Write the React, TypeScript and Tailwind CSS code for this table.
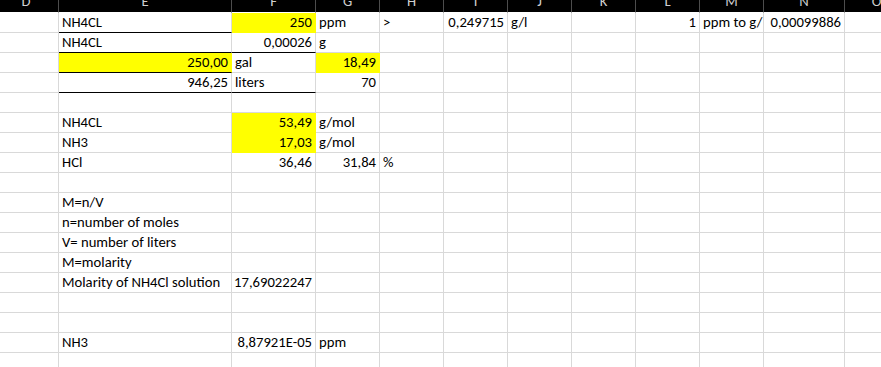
import React from "react";

type Cell = { t: string; r?: boolean; y?: boolean; bb?: boolean };
type Row = Record<number, Cell>;

const COLS = ["D", "E", "F", "G", "H", "I", "J", "K", "L", "M", "N", "O"];

// column indexes: 0 D, 1 E, 2 F, 3 G, 4 H, 5 I, 6 J, 7 K, 8 L, 9 M, 10 N, 11 O
const ROWS: Row[] = [
  {
    1: { t: "NH4CL", bb: true },
    2: { t: "250", r: true, y: true },
    3: { t: "ppm" },
    4: { t: ">" },
    5: { t: "0,249715", r: true },
    6: { t: "g/l" },
    8: { t: "1", r: true },
    9: { t: "ppm to g/" },
    10: { t: "0,00099886", r: true },
  },
  {
    1: { t: "NH4CL", bb: true },
    2: { t: "0,00026", r: true, bb: true },
    3: { t: "g" },
  },
  {
    1: { t: "250,00", r: true, y: true, bb: true },
    2: { t: "gal" },
    3: { t: "18,49", r: true, y: true },
  },
  {
    1: { t: "946,25", r: true, bb: true },
    2: { t: "liters", bb: true },
    3: { t: "70", r: true },
  },
  {},
  {
    1: { t: "NH4CL" },
    2: { t: "53,49", r: true, y: true },
    3: { t: "g/mol" },
  },
  {
    1: { t: "NH3" },
    2: { t: "17,03", r: true, y: true },
    3: { t: "g/mol" },
  },
  {
    1: { t: "HCl" },
    2: { t: "36,46", r: true },
    3: { t: "31,84", r: true },
    4: { t: "%" },
  },
  {},
  { 1: { t: "M=n/V" } },
  { 1: { t: "n=number of moles" } },
  { 1: { t: "V= number of liters" } },
  { 1: { t: "M=molarity" } },
  {
    1: { t: "Molarity of NH4Cl solution" },
    2: { t: "17,69022247", r: true },
  },
  {},
  {},
  {
    1: { t: "NH3" },
    2: { t: "8,87921E-05", r: true },
    3: { t: "ppm" },
  },
  {},
];

function cellClass(c: Cell | undefined) {
  const parts = [
    "flex h-[20px] border-r border-b border-[#d9d9d9] px-[3px] leading-[19px] whitespace-nowrap",
  ];
  if (c?.r) parts.push("justify-end");
  else parts.push("justify-start");
  if (c?.y) parts.push("bg-[#ffff00] border-r-[#ffff00]");
  else parts.push("bg-white");
  if (c?.bb) parts.push("border-b-black");
  else if (c?.y) parts.push("border-b-[#ffff00]");
  return parts.join(" ");
}

export default function App() {
  return (
    <div
      className="w-[881px] h-[367px] overflow-hidden bg-white text-black"
      style={{ fontFamily: "Carlito, Lato, 'Liberation Sans', sans-serif" }}
    >
      <div className="grid grid-cols-[59px_173px_84px_64px_64px_64px_64px_64px_64px_64px_81px_64px] w-[945px] text-[14.67px]">
        {COLS.map((c, i) => (
          <div
            key={c}
            className={
              i === 0
                ? "h-[13px] bg-black border-r border-r-[#4d4d4d] border-b border-b-white flex justify-center pr-[6px] overflow-hidden text-[#cfcfcf]"
                : "h-[13px] bg-black border-r border-r-[#4d4d4d] border-b border-b-white flex justify-center overflow-hidden text-[#cfcfcf]"
            }
          >
            <span className="leading-[12px] relative -top-[5px]">{c}</span>
          </div>
        ))}
        {ROWS.map((row, ri) =>
          COLS.map((_, ci) => {
            const c = row[ci];
            return (
              <div key={ri + "-" + ci} className={cellClass(c)}>
                {c ? <span>{c.t}</span> : null}
              </div>
            );
          })
        )}
      </div>
    </div>
  );
}
